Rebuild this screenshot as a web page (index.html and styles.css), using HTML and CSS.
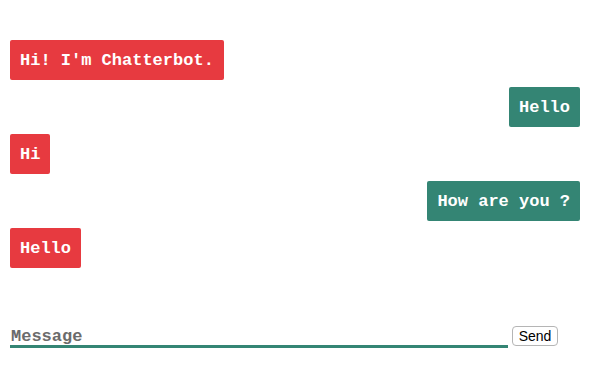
FILE: index.html
```html
<!DOCTYPE html>
<html>
<head>
<meta charset="utf-8">
<link rel="stylesheet" href="styles.css">
</head>
<body>
<div class="chat">
  <div class="messages">
    <div class="msg bot">Hi! I'm Chatterbot.</div>
    <div class="msg user">Hello</div>
    <div class="msg bot">Hi</div>
    <div class="msg user">How are you ?</div>
    <div class="msg bot">Hello</div>
  </div>
  <form class="composer">
    <input class="message-input" type="text" placeholder="Message">
    <button class="send" type="button">Send</button>
  </form>
</div>
</body>
</html>
```

FILE: styles.css
```css
html, body {
  margin: 0;
  padding: 0;
  background: #ffffff;
}

.chat {
  padding: 40px 9px 0 10px;
}

.messages {
  display: flex;
  flex-direction: column;
  gap: 7px;
}

.msg {
  font-family: "Liberation Mono", "Courier New", monospace;
  font-weight: bold;
  font-size: 17px;
  line-height: 20px;
  color: #ffffff;
  padding: 11px 10px 9px 10px;
  border-radius: 2px;
  white-space: pre;
}

.bot {
  align-self: flex-start;
  background: #e73a40;
}

.user {
  align-self: flex-end;
  background: #348574;
}

.composer {
  display: flex;
  align-items: flex-start;
  gap: 4px;
  margin: 58px 0 0 0;
}

.message-input {
  box-sizing: border-box;
  width: 498px;
  height: 22px;
  margin: 0;
  padding: 1px 1px 0 1px;
  border: none;
  border-bottom: 3px solid #348574;
  outline: none;
  font-family: "Liberation Mono", "Courier New", monospace;
  font-weight: bold;
  font-size: 17px;
  line-height: 18px;
  color: #333;
  background: transparent;
}

.message-input::placeholder {
  color: #6b6b6b;
}

.send {
  box-sizing: border-box;
  width: 46px;
  height: 20px;
  margin: 0;
  padding: 0;
  font-family: "Liberation Sans", Arial, sans-serif;
  font-size: 14px;
  color: #000;
  background: #ffffff;
  border: 1px solid #b5b5b5;
  border-radius: 4px;
}
```
